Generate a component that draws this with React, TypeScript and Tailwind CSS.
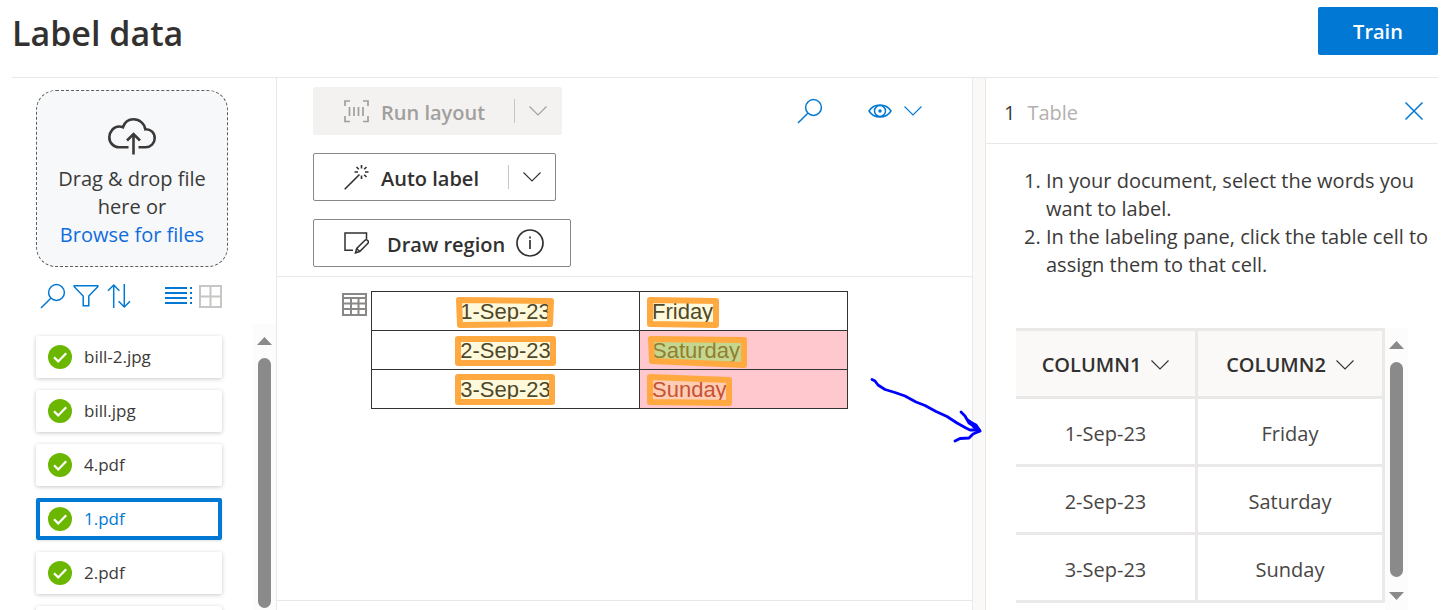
import { useState } from 'react';
import type { ReactNode } from 'react';

interface IconProps {
  className?: string;
}

interface Word {
  text: string;
  outline: string;
  fill: string;
  opacity: number;
}

const files = ['bill-2.jpg', 'bill.jpg', '4.pdf', '1.pdf', '2.pdf'];

const rows = [
  ['1-Sep-23', 'Friday'],
  ['2-Sep-23', 'Saturday'],
  ['3-Sep-23', 'Sunday'],
];

// Outlines are drawn from the top left corner of each word
const words: { date: Word; day: Word; dayClass: string }[] = [
  {
    date: { text: '1-Sep-23', outline: '-1,0 91,1 90,24 0,25', fill: '#ffe14f', opacity: 0.2 },
    day: { text: 'Friday', outline: '-2,0 64,1 64,25 -2,24', fill: '#ffe14f', opacity: 0.2 },
    dayClass: 'text-[#222222]',
  },
  {
    date: { text: '2-Sep-23', outline: '-2,0 93,0 93,24 -2,24', fill: '#ffe14f', opacity: 0.2 },
    day: { text: 'Saturday', outline: '-1,0 92,1 92,26 0,22', fill: '#6eed30', opacity: 0.4 },
    dayClass: 'bg-[#ffc7ce] text-[#a83434]',
  },
  {
    date: { text: '3-Sep-23', outline: '-2,-1 92,-1 92,24 -2,24', fill: '#ffe14f', opacity: 0.2 },
    day: { text: 'Sunday', outline: '-2,-1 77,2 77,25 -2,24', fill: '#ffe14f', opacity: 0.2 },
    dayClass: 'bg-[#ffc7ce] text-[#b8302c]',
  },
];

function SearchIcon({ className }: IconProps) {
  return (
    <svg className={className} width="26" height="26" viewBox="0 0 26 26" fill="none" stroke="currentColor" strokeWidth="1.5"><circle cx="16.5" cy="9.5" r="7.9"/><path d="M10.8 15.2 1 25"/></svg>
  );
}

function FilterIcon() {
  return (
    <svg width="26" height="26" viewBox="0 0 26 26" fill="none" stroke="currentColor" strokeWidth="1.5"><path d="M1.2 2.8h23.6v1L15.8 13v9.8h-5.600V13L1.200 3.800z"/></svg>
  );
}

function SortIcon() {
  return (
    <svg width="24" height="26" viewBox="0 0 24 26" fill="none" stroke="currentColor" strokeWidth="1.5"><path d="M6.700 25V2M1 7.700 6.700 2l5.700 5.700M17.300 1v23M11.600 18.300l5.700 5.700 5.700-5.700"/></svg>
  );
}

function ListIcon() {
  return (
    <svg width="28" height="20" viewBox="0 0 28 20" fill="currentColor"><path d="M0 1h22v2H0zM0 6h22v2H0zM0 11h22v2H0zM0 16h22v2H0zM25 1h2v2h-2zM25 6h2v2h-2zM25 11h2v2h-2zM25 16h2v2h-2z"/></svg>
  );
}

function GridIcon() {
  return (
    <svg width="23" height="23" viewBox="0 0 23 23" fill="none" stroke="currentColor" strokeWidth="2"><path d="M1 1h21v21H1zM11.500 1v21M1 11.500h21"/></svg>
  );
}

function CloudIcon() {
  return (
    <svg width="48" height="37" viewBox="0 0 48 37" fill="none" stroke="currentColor" strokeWidth="2.600"><path d="M20.500 29.200H11C5.500 29.200 1.300 24.700 1.300 19.200S5.700 8.500 11 8.500c1.500 0 2.800.2 4 .7C16.500 4.600 20.500 1.300 25.500 1.300c6 0 11 4.200 11.800 10C43 11 46.700 15 46.700 20.200c0 5-4 9-9 9H30.500"/><path d="M25.500 36.500V16.500M19 22.500l6.500-6.500 6.500 6.500"/></svg>
  );
}

function ChevronIcon({ className }: IconProps) {
  return (
    <svg className={className} width="18" height="10" viewBox="0 0 18 10" fill="none" stroke="currentColor" strokeWidth="1.1"><path d="m.5.500 8.500 8.500L17.500.500"/></svg>
  );
}

function ScanIcon() {
  return (
    <svg width="25" height="23" viewBox="0 0 25 23" fill="none" stroke="currentColor" strokeWidth="1.700"><path d="M6 1H1v5M19 1h5v5M1 16v5.500h5M24 16v5.500h-5M5.500 7v9M10 7v9M14.500 7v9M19 7v9"/></svg>
  );
}

function WandIcon() {
  return (
    <svg width="25" height="25" viewBox="0 0 25 25" fill="none" stroke="currentColor" strokeWidth="1.600"><path d="M.7 24.300 15.500 9.500M17.500 0v3.500M17.500 10.500V14M10.500 7H14M21 7h3.500M12.500 2l2.300 2.300M22.500 2l-2.300 2.300M22.500 12l-2.300-2.300"/></svg>
  );
}

function RegionIcon() {
  return (
    <svg width="25" height="22" viewBox="0 0 25 22" fill="none" stroke="currentColor" strokeWidth="1.500"><path d="M9 18.200H1V1h21.500v6"/><path d="m11.500 20.800 1.200-4.300 8-8a2.100 2.100 0 0 1 3 3l-8 8zM12.700 16.500l3 3"/></svg>
  );
}

function InfoIcon() {
  return (
    <svg width="28" height="28" viewBox="0 0 28 28" fill="none" stroke="currentColor" strokeWidth="1.700"><circle cx="14" cy="14" r="13"/><path d="M14 11v9M14 7.500v2"/></svg>
  );
}

function EyeIcon() {
  return (
    <svg width="24" height="14" viewBox="0 0 24 14" fill="none" stroke="currentColor" strokeWidth="1.500"><path d="M1 7c5-8 17-8 22 0-5 8-17 8-22 0z"/><circle cx="12" cy="7" r="5.500"/><circle cx="12" cy="7" r="1.700" fill="currentColor" stroke="none"/></svg>
  );
}

function TableIcon() {
  return (
    <svg width="25" height="23" viewBox="0 0 25 23" fill="none" stroke="#8a8886" strokeWidth="2"><path d="M1 1h23v21H1zM1 5h23M1 10.500h23M1 16h23M9 5v17M16.500 5v17"/></svg>
  );
}

function CheckBadge() {
  return (
    <svg width="24" height="24" viewBox="0 0 24 24" className="shrink-0"><circle cx="12" cy="12" r="12" fill="#6bb700"/><path d="m6 12.200 4.200 4.200 8-8.200" fill="none" stroke="#fff" strokeWidth="2.200"/></svg>
  );
}

function Arrowhead({ down = false }: { down?: boolean }) {
  return (
    <svg width="15" height="8" viewBox="0 0 15 8" fill="#8a8a8a"><path d={down ? 'M0 0h15L7.500 8z' : 'M0 8h15L7.500 0z'}/></svg>
  );
}

function LabeledWord({ word }: { word: Word }) {
  return (
    <span className="relative inline-block h-6 align-middle leading-6">
      {word.text}
      <svg className="absolute inset-0 h-full w-full overflow-visible">
        <polygon points={word.outline} fill={word.fill} fillOpacity={word.opacity} stroke="#ffa940" strokeWidth="6" strokeLinejoin="round"/>
      </svg>
    </span>
  );
}

interface SplitButtonProps {
  icon: ReactNode;
  label: string;
  disabled?: boolean;
}

function SplitButton({ icon, label, disabled = false }: SplitButtonProps) {
  return (
    <div
      className={
        disabled
          ? 'flex h-12 items-center rounded-xs border border-[#f3f2f1] bg-[#f3f2f1] text-[#a19f9d]'
          : 'flex h-12 items-center rounded-xs border border-[#8a8886] text-[#323130]'
      }
    >
      <button type="button" disabled={disabled} className="flex h-full items-center gap-3 pl-[30px] pr-[29px] font-semibold">
        {icon}
        <span className="pt-[3px]">{label}</span>
      </button>
      <span className="h-6 w-px bg-[#c8c6c4]" />
      <button type="button" disabled={disabled} aria-label={`${label} options`} className="flex h-full items-center px-[14px]">
        <ChevronIcon />
      </button>
    </div>
  );
}

export default function App() {
  const [selected, setSelected] = useState('1.pdf');

  return (
    <div className="flex h-screen flex-col overflow-hidden bg-white pl-3 pr-[6px] font-['Open_Sans','Noto_Sans',sans-serif] text-[20px] leading-7 text-[#3b3a39]">
      <header className="flex h-[78px] shrink-0 items-start justify-between border-b border-[#e8e8e8] pt-[7px]">
        <h1 className="text-[34px] font-semibold leading-[52px] text-[#323130]">Label data</h1>
        <button type="button" className="h-12 w-[120px] rounded-xs bg-[#0078d4] pt-[2px] font-semibold text-white">Train</button>
      </header>

      <div className="flex min-h-0 flex-1">
        {/* File list */}
        <aside className="flex w-[265px] shrink-0 flex-col border-r border-[#e8e8e8] pl-6 pt-3">
          <div className="flex h-[177px] w-48 shrink-0 flex-col items-center rounded-[20px] border border-dashed border-[#605e5c] bg-[#f7f8fa] pt-[27px] text-center">
            <CloudIcon />
            <p className="pt-[10px]">
              Drag &amp; drop file
              <br />
              here or
              <br />
              <a href="#browse" className="text-[#0f6cde]">Browse for files</a>
            </p>
          </div>

          <div className="flex w-[186px] shrink-0 items-center pl-1 pt-4 text-[#0078d4]">
            <button type="button" aria-label="Search files"><SearchIcon /></button>
            <button type="button" aria-label="Filter files" className="ml-[7px]"><FilterIcon /></button>
            <button type="button" aria-label="Sort files" className="ml-2"><SortIcon /></button>
            <button type="button" aria-label="List view" className="ml-auto"><ListIcon /></button>
            <button type="button" aria-label="Grid view" className="ml-[6px] text-[#c8c6c4]"><GridIcon /></button>
          </div>

          <div className="flex min-h-0 flex-1 justify-between pt-[15px]">
            <ul className="flex w-[186px] flex-col gap-3 pt-3">
              {files.map((file) => (
                <li key={file} className="shrink-0">
                  <button
                    type="button"
                    onClick={() => setSelected(file)}
                    className={
                      file === selected
                        ? 'flex h-[42px] w-full items-center gap-3 rounded-xs border-4 border-[#0078d4] px-2 text-[17px] text-[#0078d4] shadow'
                        : 'flex h-[42px] w-full items-center gap-3 rounded-xs px-3 text-[17px] shadow-[0_1px_4px_rgba(0,0,0,0.22)]'
                    }
                  >
                    <CheckBadge />
                    {file}
                  </button>
                </li>
              ))}
              <li className="h-[42px] shrink-0 rounded-xs shadow-[0_1px_4px_rgba(0,0,0,0.22)]" />
            </ul>
            <div className="flex w-[23px] flex-col items-center bg-[#fcfcfc] pb-[2px] pt-[13px]">
              <Arrowhead />
              <span className="mt-[13px] w-[13px] flex-1 rounded-full bg-[#8a8a8a]" />
            </div>
          </div>
        </aside>

        {/* Document viewer */}
        <main className="relative flex min-w-0 flex-1 flex-col">
          <div className="flex shrink-0 items-start justify-between border-b border-[#e8e8e8] pb-[9px] pl-9 pr-[50px] pt-[9px]">
            <div className="flex flex-col items-start gap-[18px]">
              <SplitButton icon={<ScanIcon />} label="Run layout" disabled />
              <SplitButton icon={<WandIcon />} label="Auto label" />
              <button type="button" className="flex h-12 items-center rounded-xs border border-[#8a8886] pl-[30px] pr-[26px] font-semibold text-[#323130]">
                <RegionIcon />
                <span className="pl-[18px] pr-[11px] pt-[3px]">Draw region</span>
                <InfoIcon />
              </button>
            </div>
            <div className="flex h-12 items-center text-[#0078d4]">
              <button type="button" aria-label="Search document"><SearchIcon /></button>
              <button type="button" aria-label="Visibility" className="ml-[45px] flex items-center gap-3">
                <EyeIcon />
                <ChevronIcon />
              </button>
            </div>
          </div>

          <div className="flex flex-1 items-start gap-1 border-b border-[#e8e8e8] pl-[65px] pt-[14px]">
            <span className="pt-[2px]"><TableIcon /></span>
            <table className="w-[477px] border-collapse font-['Liberation_Sans',Arial,sans-serif] text-[22px] text-[#222222]">
              <tbody>
                {words.map(({ date, day, dayClass }) => (
                  <tr key={date.text} className="h-[39px]">
                    <td className="w-[268px] border border-[#333333] p-0 text-center">
                      <LabeledWord word={date} />
                    </td>
                    <td className={`border border-[#333333] p-0 pl-3 ${dayClass}`}>
                      <LabeledWord word={day} />
                    </td>
                  </tr>
                ))}
              </tbody>
            </table>
          </div>
          <div className="h-[9px] shrink-0" />

          {/* Hand-drawn pointer to the labeling pane */}
          <svg className="absolute right-[-12px] top-[298px] z-10" width="116" height="70" viewBox="868 376 116 70" fill="none" stroke="#0000ff" strokeWidth="2.800" strokeLinecap="round" strokeLinejoin="round">
            <path d="M872 379.500l3 1.500 3 4 7 4.500 10 3 10 3.500 11 6 9 3.500 11 6 11 5 10 6.500 9 5 4 2h9"/>
            <path d="M961 412l4 4 4 7 5 3 2 4 4 1-4-6-6-3M980 431l-7 3-4 4-9 .5-5 2.500" />
            <path d="M968 420l8 6 4 5-6-4z" fill="#0000ff"/>
          </svg>
        </main>

        <div className="w-[14px] shrink-0 border-x border-[#e8e8e8] bg-[#faf9f8]" />

        {/* Labeling pane */}
        <section className="flex w-[452px] shrink-0 flex-col">
          <div className="flex h-[66px] shrink-0 items-center justify-between border-b border-[#e8e8e8] pl-[18px] pr-[15px]">
            <p className="flex gap-3 pt-1">
              <span>1</span>
              <span className="text-[#b3b0ad]">Table</span>
            </p>
            <button type="button" aria-label="Close" className="text-[#0078d4]">
              <svg width="18" height="18" viewBox="0 0 18 18" fill="none" stroke="currentColor" strokeWidth="1.500"><path d="m.5.500 17 17M17.500.500l-17 17"/></svg>
            </button>
          </div>

          <ol className="list-decimal pb-[49px] pl-[60px] pt-[23px]">
            <li>In your document, select the words you want to label.</li>
            <li>In the labeling pane, click the table cell to assign them to that cell.</li>
          </ol>

          <div className="flex min-h-0 flex-1 items-stretch pl-[30px]">
            <div className="w-[369px]">
              <table className="w-full table-fixed border-separate border-spacing-0 border-t-3 border-[#ebe9e7] text-center">
                <thead>
                  <tr className="h-[68px] bg-[#faf9f8] text-[#323130]">
                    {['COLUMN1', 'COLUMN2'].map((column) => (
                      <th key={column} className="border-b-3 border-r-3 border-[#ebe9e7] p-0 font-semibold first:w-[182px]">
                        <button type="button" className="inline-flex items-center gap-[10px] pt-[2px]">
                          {column}
                          <ChevronIcon />
                        </button>
                      </th>
                    ))}
                  </tr>
                </thead>
                <tbody>
                  {rows.map((row) => (
                    <tr key={row[0]} className="h-[68px]">
                      {row.map((cell) => (
                        <td key={cell} className="border-b-3 border-r-3 border-[#ebe9e7] p-0 pt-1 text-[#484644]">{cell}</td>
                      ))}
                    </tr>
                  ))}
                </tbody>
              </table>
            </div>
            <div className="flex w-[23px] flex-col items-center bg-[#fcfcfc] pb-[10px] pt-[13px]">
              <Arrowhead />
              <span className="mb-[15px] mt-[13px] w-[13px] flex-1 rounded-full bg-[#8a8a8a]" />
              <Arrowhead down />
            </div>
          </div>
        </section>
      </div>
    </div>
  );
}
